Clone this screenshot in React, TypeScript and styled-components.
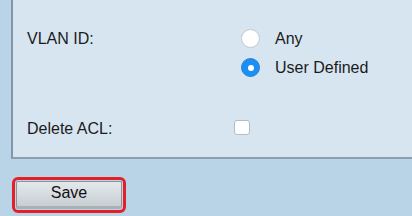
import React from 'react';
import styled, { createGlobalStyle } from 'styled-components';

const Global = createGlobalStyle`
  html, body {
    margin: 0;
    padding: 0;
    background: #b9d4e7;
    font-family: "Liberation Sans", Arial, sans-serif;
  }
`;

const Page = styled.div`
  width: 412px;
  height: 216px;
  overflow: hidden;
  background: #b9d4e7;
`;

const Panel = styled.div`
  margin-left: 11px;
  height: 159px;
  box-sizing: border-box;
  background: #d7e5f1;
  border-left: 2px solid #7f97a8;
  border-bottom: 2px solid #8aa0b0;
  padding: 28px 0 0 14px;
`;

const Row = styled.div<{ $h: number }>`
  display: grid;
  grid-template-columns: 214px 1fr;
  height: ${p => p.$h}px;
`;

const Label = styled.div`
  font-size: 16px;
  color: #1b1b1b;
  padding-top: 2px;
`;

const Options = styled.div`
  display: flex;
  flex-direction: column;
  gap: 10px;
  padding-top: 1px;
`;

const Option = styled.label`
  display: flex;
  align-items: center;
  gap: 15px;
  font-size: 16px;
  color: #1b1b1b;
  height: 19px;
`;

const Radio = styled.span<{ $on?: boolean }>`
  width: 19px;
  height: 19px;
  box-sizing: border-box;
  border-radius: 50%;
  background: ${p => (p.$on ? '#1f8ef1' : '#fff')};
  border: 1px solid ${p => (p.$on ? '#1a86e6' : '#c3c8cc')};
  display: flex;
  align-items: center;
  justify-content: center;
  &::after {
    content: '';
    width: 6px;
    height: 6px;
    border-radius: 50%;
    background: #fff;
    display: ${p => (p.$on ? 'block' : 'none')};
  }
`;

const Check = styled.span`
  display: block;
  width: 16px;
  height: 15px;
  box-sizing: border-box;
  margin-left: -7px;
  margin-top: 2px;
  border-radius: 3px;
  background: #fff;
  border: 1px solid #b5bbc0;
`;

const Footer = styled.div`
  padding: 18px 0 0 12px;
`;

const Highlight = styled.div`
  display: inline-block;
  border: 3px solid #e3202a;
  border-radius: 6px;
  padding: 1px;
`;

const SaveButton = styled.button`
  width: 106px;
  height: 28px;
  font-family: "Liberation Sans", Arial, sans-serif;
  font-size: 16px;
  color: #111;
  border: 1px solid #8c9499;
  border-bottom: 3px solid #a9b1b6;
  border-radius: 2px;
  background: linear-gradient(to bottom, #e3e8eb, #c8cfd3);
  padding: 0 0 3px;
`;

export default function App() {
  return (
    <Page>
      <Global />
      <Panel>
        <Row $h={90}>
          <Label>VLAN ID:</Label>
          <Options>
            <Option>
              <Radio />
              Any
            </Option>
            <Option>
              <Radio $on />
              User Defined
            </Option>
          </Options>
        </Row>
        <Row $h={38}>
          <Label>Delete ACL:</Label>
          <Check />
        </Row>
      </Panel>
      <Footer>
        <Highlight>
          <SaveButton>Save</SaveButton>
        </Highlight>
      </Footer>
    </Page>
  );
}
